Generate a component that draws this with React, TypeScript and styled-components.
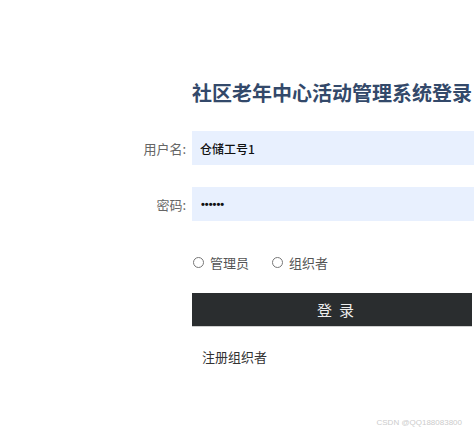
import React from "react";
import styled, { createGlobalStyle } from "styled-components";

const Global = createGlobalStyle`
  html, body { margin: 0; padding: 0; background: #ffffff; }
  body { font-family: "Noto Sans CJK SC", "Noto Sans", sans-serif; overflow: hidden; }
`;

const Page = styled.div`
  position: relative;
  width: 474px;
  height: 434px;
  overflow: hidden;
  background: #ffffff;
`;

const Form = styled.div`
  display: flex;
  flex-direction: column;
  padding-top: 80px;
`;

const Title = styled.h1`
  margin: 0 0 0 192px;
  font-size: 20px;
  line-height: 26px;
  font-weight: 700;
  color: #33496a;
  white-space: nowrap;
`;

const Row = styled.div<{ $top: number }>`
  display: grid;
  grid-template-columns: 192px 300px;
  align-items: center;
  margin-top: ${(p) => p.$top}px;
`;

const Label = styled.label`
  text-align: right;
  padding-right: 6px;
  font-size: 13px;
  color: #666666;
  white-space: nowrap;
`;

const Input = styled.input<{ $secret?: boolean }>`
  box-sizing: border-box;
  width: 300px;
  height: 34px;
  border: none;
  outline: none;
  background: #e8f0fe;
  padding: 0 0 0 ${(p) => (p.$secret ? "9px" : "8px")};
  font-family: ${(p) =>
    p.$secret ? `"Liberation Sans", sans-serif` : `"Noto Sans CJK SC", sans-serif`};
  font-size: ${(p) => (p.$secret ? "11px" : "12px")};
  font-weight: ${(p) => (p.$secret ? 700 : 500)};
  color: #111111;
`;

const Radios = styled.div`
  display: flex;
  align-items: center;
  gap: 22px;
  margin: 31px 0 0 192px;
  height: 20px;
`;

const RadioItem = styled.label`
  display: flex;
  align-items: center;
  gap: 6px;
  font-size: 13px;
  color: #555555;
`;

const Circle = styled.span`
  box-sizing: border-box;
  width: 11px;
  height: 11px;
  border: 1px solid #777777;
  border-radius: 50%;
  margin-left: 1px;
`;

const Button = styled.button`
  margin: 21px 0 0 192px;
  width: 280px;
  height: 34px;
  border: none;
  border-bottom: 1px solid #cfcfcf;
  background: #2a2d2f;
  color: #eeeeee;
  font-family: "Noto Sans CJK SC", sans-serif;
  font-size: 15px;
  letter-spacing: 7px;
  padding: 0 0 0 14px;
  cursor: pointer;
`;

const Register = styled.a`
  margin: 20px 0 0 202px;
  font-size: 13px;
  color: #333333;
  text-decoration: none;
`;

const Watermark = styled.div`
  position: absolute;
  right: 12px;
  bottom: 7px;
  font-family: "Liberation Sans", sans-serif;
  font-size: 8px;
  color: #cccccc;
`;

export default function App() {
  return (
    <Page>
      <Global />
      <Form>
        <Title>社区老年中心活动管理系统登录</Title>
        <Row $top={25}>
          <Label>用户名:</Label>
          <Input defaultValue="仓储工号1" />
        </Row>
        <Row $top={22}>
          <Label>密码:</Label>
          <Input $secret type="password" defaultValue="123456" />
        </Row>
        <Radios>
          <RadioItem>
            <Circle />
            管理员
          </RadioItem>
          <RadioItem>
            <Circle />
            组织者
          </RadioItem>
        </Radios>
        <Button>登录</Button>
        <Register href="#">注册组织者</Register>
      </Form>
      <Watermark>CSDN @QQ188083800</Watermark>
    </Page>
  );
}
